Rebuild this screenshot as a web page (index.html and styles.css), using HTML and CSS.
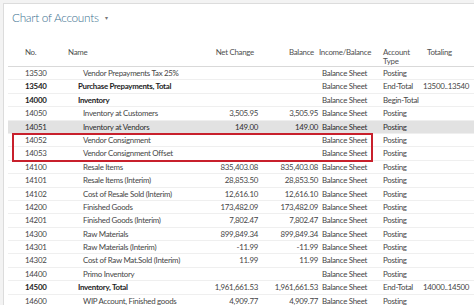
FILE: index.html
```html
<!doctype html>
<html lang="en">
<head>
	<meta charset="UTF-8">
	<title>Chart of Accounts</title>
	<link rel="stylesheet" href="styles.css">
</head>
<body>
	<div class="panel">
		<div class="title">Chart of Accounts <span class="caret">&#9662;</span></div>
		<div class="table">
			<div class="row head">
				<div class="no">No.</div>
				<div class="name">Name</div>
				<div class="num">Net Change</div>
				<div class="num">Balance</div>
				<div class="ib">Income/Balance</div>
				<div class="type">Account<br>Type</div>
				<div class="tot">Totaling</div>
			</div>
			<div class="row">
				<div class="no">13530</div><div class="name l2">Vendor Prepayments Tax 25%</div><div class="num"></div><div class="num"></div><div class="ib">Balance Sheet</div><div class="type">Posting</div><div class="tot"></div>
			</div>
			<div class="row bold">
				<div class="no">13540</div><div class="name l1">Purchase Prepayments, Total</div><div class="num"></div><div class="num"></div><div class="ib">Balance Sheet</div><div class="type">End-Total</div><div class="tot">13500..13540</div>
			</div>
			<div class="row bold">
				<div class="no">14000</div><div class="name l1">Inventory</div><div class="num"></div><div class="num"></div><div class="ib">Balance Sheet</div><div class="type">Begin-Total</div><div class="tot"></div>
			</div>
			<div class="row">
				<div class="no">14050</div><div class="name l2">Inventory at Customers</div><div class="num">3,505.95</div><div class="num">3,505.95</div><div class="ib">Balance Sheet</div><div class="type">Posting</div><div class="tot"></div>
			</div>
			<div class="row sel">
				<div class="no">14051</div><div class="name l2">Inventory at Vendors</div><div class="num">149.00</div><div class="num">149.00</div><div class="ib">Balance Sheet</div><div class="type">Posting</div><div class="tot"></div>
			</div>
			<div class="marked">
				<div class="row">
					<div class="no">14052</div><div class="name l2">Vendor Consignment</div><div class="num"></div><div class="num"></div><div class="ib">Balance Sheet</div><div class="type">Posting</div><div class="tot"></div>
				</div>
				<div class="row">
					<div class="no">14053</div><div class="name l2">Vendor Consignment Offset</div><div class="num"></div><div class="num"></div><div class="ib">Balance Sheet</div><div class="type">Posting</div><div class="tot"></div>
				</div>
			</div>
			<div class="row">
				<div class="no">14100</div><div class="name l2">Resale Items</div><div class="num">835,403.08</div><div class="num">835,403.08</div><div class="ib">Balance Sheet</div><div class="type">Posting</div><div class="tot"></div>
			</div>
			<div class="row">
				<div class="no">14101</div><div class="name l2">Resale Items (Interim)</div><div class="num">28,853.50</div><div class="num">28,853.50</div><div class="ib">Balance Sheet</div><div class="type">Posting</div><div class="tot"></div>
			</div>
			<div class="row">
				<div class="no">14102</div><div class="name l2">Cost of Resale Sold (Interim)</div><div class="num">12,616.10</div><div class="num">12,616.10</div><div class="ib">Balance Sheet</div><div class="type">Posting</div><div class="tot"></div>
			</div>
			<div class="row">
				<div class="no">14200</div><div class="name l2">Finished Goods</div><div class="num">173,482.09</div><div class="num">173,482.09</div><div class="ib">Balance Sheet</div><div class="type">Posting</div><div class="tot"></div>
			</div>
			<div class="row">
				<div class="no">14201</div><div class="name l2">Finished Goods (Interim)</div><div class="num">7,802.47</div><div class="num">7,802.47</div><div class="ib">Balance Sheet</div><div class="type">Posting</div><div class="tot"></div>
			</div>
			<div class="row">
				<div class="no">14300</div><div class="name l2">Raw Materials</div><div class="num">899,849.34</div><div class="num">899,849.34</div><div class="ib">Balance Sheet</div><div class="type">Posting</div><div class="tot"></div>
			</div>
			<div class="row">
				<div class="no">14301</div><div class="name l2">Raw Materials (Interim)</div><div class="num">-11.99</div><div class="num">-11.99</div><div class="ib">Balance Sheet</div><div class="type">Posting</div><div class="tot"></div>
			</div>
			<div class="row">
				<div class="no">14302</div><div class="name l2">Cost of Raw Mat.Sold (Interim)</div><div class="num">11.99</div><div class="num">11.99</div><div class="ib">Balance Sheet</div><div class="type">Posting</div><div class="tot"></div>
			</div>
			<div class="row">
				<div class="no">14400</div><div class="name l2">Primo Inventory</div><div class="num"></div><div class="num"></div><div class="ib">Balance Sheet</div><div class="type">Posting</div><div class="tot"></div>
			</div>
			<div class="row bold">
				<div class="no">14500</div><div class="name l1">Inventory, Total</div><div class="num">1,961,661.53</div><div class="num">1,961,661.53</div><div class="ib">Balance Sheet</div><div class="type">End-Total</div><div class="tot">14000..14500</div>
			</div>
			<div class="row">
				<div class="no">14600</div><div class="name l2">WIP Account, Finished goods</div><div class="num">4,909.77</div><div class="num">4,909.77</div><div class="ib">Balance Sheet</div><div class="type">Posting</div><div class="tot"></div>
			</div>
		</div>
	</div>
</body>
</html>
```

FILE: styles.css
```css
body{
	margin: 0;
	background: #f3f3f3;
	font-family: Lato, "Liberation Sans", sans-serif;
	color: #464646;
	overflow: hidden;
}
.panel{
	margin: 3px 0 0 3px;
	height: 310px;
	background: #fff;
	border-top: 1px solid #dcdcdc;
	border-left: 1px solid #dcdcdc;
}
.title{
	height: 28px;
	line-height: 28px;
	padding-left: 8px;
	font-size: 11.8px;
	font-weight: 300;
	letter-spacing: -0.3px;
	color: #3b7190;
}
.caret{
	font-size: 6px;
	color: #777;
	vertical-align: 2px;
	margin-left: 3px;
}
.table{
	margin-left: 4px;
	padding-top: 12px;
	font-size: 7.9px;
	letter-spacing: -0.28px;
}
.row{
	display: grid;
	grid-template-columns: 60px 132px 58px 60px 65px 40px 1fr;
	height: 13.4px;
	line-height: 13.4px;
	border-bottom: 1px solid #efefef;
	box-sizing: border-box;
	white-space: nowrap;
}
.head{
	height: 23px;
	padding-top: 3.5px;
	line-height: 9px;
	color: #505050;
	border-bottom: 1px solid #d9d9d9;
}
.no{
	padding-left: 17px;
}
.num{
	text-align: right;
}
.head .num{
	padding-right: 4px;
}
.ib{
	padding-left: 4px;
}
.head .ib{
	padding-left: 1px;
}
.head .tot{
	padding-left: 4px;
}
.l1{
	padding-left: 10px;
}
.l2{
	padding-left: 15px;
}
.bold .no,
.bold .name{
	font-weight: bold;
	color: #1e1e1e;
}
.sel{
	background: #e2e2e2;
	color: #2e2e2e;
}
.marked{
	position: relative;
}
.marked::after{
	content: "";
	position: absolute;
	left: 4px;
	top: -1px;
	width: 361px;
	bottom: -1px;
	border: 2px solid #c8202c;
	box-sizing: border-box;
}
```
